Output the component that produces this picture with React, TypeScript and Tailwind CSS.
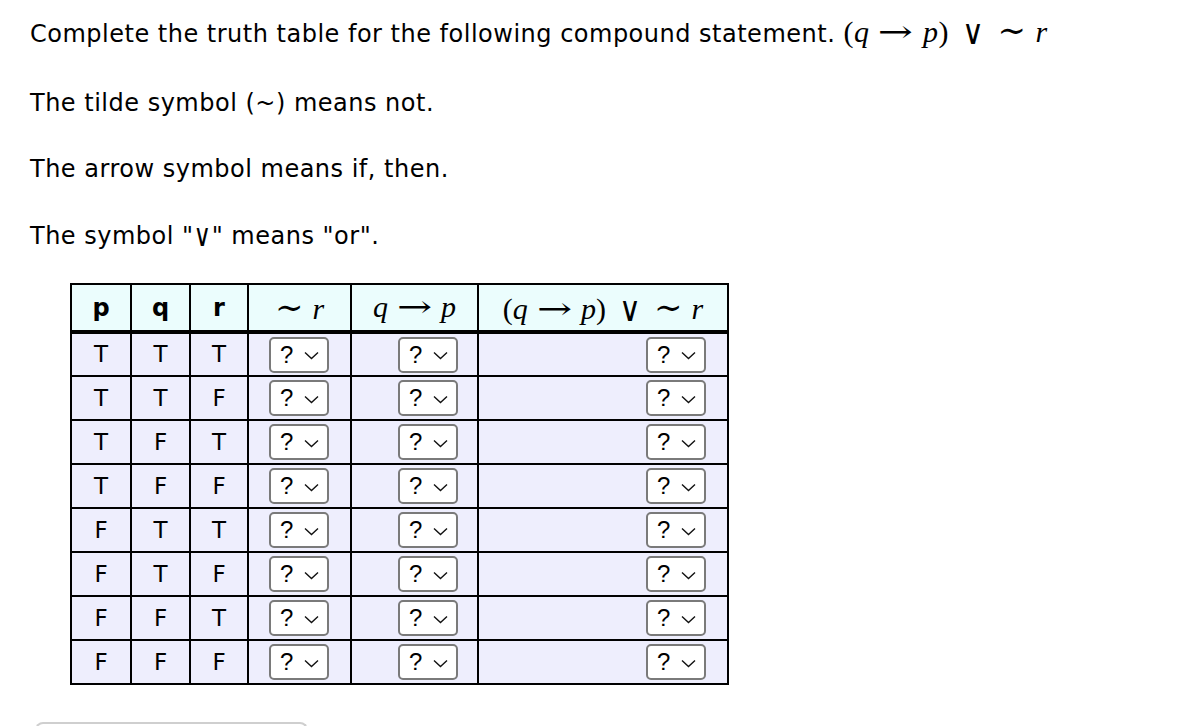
import React from "react";

const rows = [
  ["T", "T", "T"],
  ["T", "T", "F"],
  ["T", "F", "T"],
  ["T", "F", "F"],
  ["F", "T", "T"],
  ["F", "T", "F"],
  ["F", "F", "T"],
  ["F", "F", "F"],
];

const sans = "font-['DejaVu_Sans','Verdana',sans-serif]";

// math pieces, set roughly like KaTeX output
const V = ({ c }: { c: string }) => (
  <span className="font-['Liberation_Serif','Times_New_Roman',serif] italic">{c}</span>
);
const Paren = ({ c }: { c: string }) => (
  <span className="font-['Liberation_Serif','Times_New_Roman',serif]">{c}</span>
);
const Arrow = () => (
  <span className="mx-[14px] inline-block scale-x-[1.4] font-['DejaVu_Serif',serif]">→</span>
);
const Or = () => (
  <span className="mx-[13px] inline-block scale-y-[1.15] font-['DejaVu_Sans',sans-serif] text-[30px]">∨</span>
);
const Not = () => (
  <span className="mr-[9px] inline-block font-['DejaVu_Serif',serif] text-[34px]">∼</span>
);

const Imp = () => (
  <span className="whitespace-nowrap text-[30px] leading-none">
    <V c="q" />
    <Arrow />
    <V c="p" />
  </span>
);
const NotR = () => (
  <span className="whitespace-nowrap text-[30px] leading-none">
    <Not />
    <V c="r" />
  </span>
);
const Full = () => (
  <span className="whitespace-nowrap text-[30px] leading-none">
    <Paren c="(" />
    <V c="q" />
    <Arrow />
    <V c="p" />
    <Paren c=")" />
    <Or />
    <Not />
    <V c="r" />
  </span>
);

// the little "? ∨" dropdown in every answer cell
const Pick = () => (
  <div className="inline-flex h-[36px] w-[60px] items-center justify-between rounded-[5px] border-2 border-[#7a7a7a] bg-white pl-[9px] pr-[8px] align-middle">
    <span className="font-['Liberation_Sans',Arial,sans-serif] text-[24px] leading-none text-black">?</span>
    <svg width="15" height="9" viewBox="0 0 15 9" className="mt-[2px]">
      <polyline points="1,1.5 7.5,7.5 14,1.5" fill="none" stroke="#111" strokeWidth="1.4" />
    </svg>
  </div>
);

export default function App() {
  return (
    <div className={`min-h-[726px] w-full bg-white pl-[30px] pt-[13px] text-black ${sans}`}>
      <p className="h-[40px] text-[24px] leading-[40px] tracking-[0.5px]">
        Complete the truth table for the following compound statement.{" "}
        <Full />
      </p>
      <p className="mt-[30px] h-[40px] text-[24px] leading-[40px] tracking-[0.5px]">The tilde symbol (~) means not.</p>
      <p className="mt-[26px] h-[40px] text-[24px] leading-[40px] tracking-[0.5px]">The arrow symbol means if, then.</p>
      <p className="mt-[27px] h-[40px] text-[24px] leading-[40px] tracking-[0.5px]">
        The symbol "<span className="inline-block scale-y-[1.3]">∨</span>" means "or".
      </p>

      <table className="ml-[40px] mt-[27px] table-fixed border-collapse" style={{ width: 657 }}>
        <colgroup>
          <col style={{ width: 60 }} />
          <col style={{ width: 59 }} />
          <col style={{ width: 58 }} />
          <col style={{ width: 103 }} />
          <col style={{ width: 127 }} />
          <col style={{ width: 250 }} />
        </colgroup>
        <thead>
          <tr className="h-[48px] bg-[#ebfdfd]">
            <th className="border-2 border-b-[4px] border-black p-0 text-[24px] font-semibold">p</th>
            <th className="border-2 border-b-[4px] border-black p-0 text-[24px] font-semibold">q</th>
            <th className="border-2 border-b-[4px] border-black p-0 text-[24px] font-semibold">r</th>
            <th className="border-2 border-b-[4px] border-black p-0 font-normal">
              <NotR />
            </th>
            <th className="border-2 border-b-[4px] border-black p-0 font-normal">
              <Imp />
            </th>
            <th className="border-2 border-b-[4px] border-black p-0 font-normal">
              <Full />
            </th>
          </tr>
        </thead>
        <tbody>
          {rows.map((r, i) => (
            <tr key={i} className="h-[44px] bg-[#eeeefd]">
              {r.map((v, j) => (
                <td key={j} className="border-2 border-black p-0 text-center text-[23px]">
                  {v}
                </td>
              ))}
              <td className="border-2 border-black p-0 pr-[21px] text-right">
                <Pick />
              </td>
              <td className="border-2 border-black p-0 pr-[19px] text-right">
                <Pick />
              </td>
              <td className="border-2 border-black p-0 pr-[21px] text-right">
                <Pick />
              </td>
            </tr>
          ))}
        </tbody>
      </table>

      <div className="ml-[5px] mt-[37px] h-[12px] w-[273px] rounded-t-[8px] border-2 border-b-0 border-[#cfcfcf]" />
    </div>
  );
}
